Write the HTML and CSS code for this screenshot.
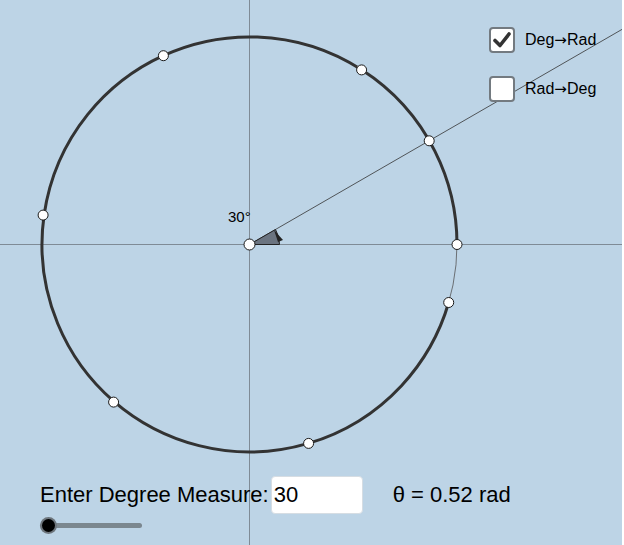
FILE: index.html
```html
<!DOCTYPE html>
<html>
<head>
<meta charset="utf-8">
<link rel="stylesheet" href="styles.css">
</head>
<body>
<div class="applet">
  <svg class="canvas" width="622" height="545" viewBox="0 0 622 545">
    <line class="axis" x1="249.5" y1="0" x2="249.5" y2="545"/>
    <line class="axis" x1="0" y1="244.5" x2="622" y2="244.5"/>
    <circle class="thin" cx="249.5" cy="244.5" r="207.5"/>
    <path class="thick" d="M457 244.5 A207.5 207.5 0 1 0 448.7 302.5"/>
    <line class="ray" x1="249.5" y1="244.5" x2="622" y2="29.4"/>
    <path class="sector" d="M249.5 244.5 L279.5 244.5 A30 30 0 0 0 275.5 229.5 Z"/>
    <path class="arrow" d="M274 230 L278 242 L283 240 Z"/>
    <g class="pts">
      <circle cx="457" cy="244.5" r="5"/>
      <circle cx="361.6" cy="69.9" r="5"/>
      <circle cx="163.4" cy="55.7" r="5"/>
      <circle cx="43.1" cy="215.1" r="5"/>
      <circle cx="113.6" cy="402.1" r="5"/>
      <circle cx="308.6" cy="443.4" r="5"/>
      <circle cx="448.7" cy="302.5" r="5"/>
      <circle cx="429.2" cy="140.8" r="5"/>
      <circle cx="249.5" cy="244.5" r="5.5"/>
    </g>
    <text class="lbl" x="228" y="222">30°</text>
  </svg>

  <div class="toggles">
    <label class="toggle">
      <span class="box checked">
        <svg width="22" height="22" viewBox="0 0 22 22"><path d="M4 11.5 L9 16.5 L18 5" fill="none" stroke="#333" stroke-width="3.6" stroke-linecap="round" stroke-linejoin="round"/></svg>
      </span>
      <span class="txt">Deg<span class="arr">→</span>Rad</span>
    </label>
    <label class="toggle">
      <span class="box"></span>
      <span class="txt">Rad<span class="arr">→</span>Deg</span>
    </label>
  </div>

  <div class="controls">
    <div class="entry">
      <span class="caption">Enter Degree Measure:</span>
      <span class="field">30</span>
      <span class="result">θ = 0.52 rad</span>
    </div>
    <div class="slider">
      <span class="knob"></span>
    </div>
  </div>
</div>
</body>
</html>
```

FILE: styles.css
```css
html, body {
  margin: 0;
  padding: 0;
  background: #ffffff;
}
.applet {
  position: relative;
  width: 622px;
  height: 545px;
  background: #bdd4e6;
  overflow: hidden;
  font-family: "Liberation Sans", Arial, sans-serif;
  color: #000;
}
.canvas {
  position: absolute;
  left: 0;
  top: 0;
}
.axis {
  stroke: #7f8b96;
  stroke-width: 1;
}
.thin {
  fill: none;
  stroke: #6a6f74;
  stroke-width: 1;
}
.thick {
  fill: none;
  stroke: #333333;
  stroke-width: 3;
}
.ray {
  stroke: #333;
  stroke-width: 0.8;
}
.sector {
  fill: #6b7480;
  stroke: #222;
  stroke-width: 1;
}
.arrow {
  fill: #222;
}
.pts circle {
  fill: #ffffff;
  stroke: #1a1a1a;
  stroke-width: 1;
}
.lbl {
  font-family: "Liberation Sans", Arial, sans-serif;
  font-size: 15px;
  fill: #000;
}
.toggles {
  position: absolute;
  left: 489px;
  top: 27px;
  display: flex;
  flex-direction: column;
  gap: 23px;
}
.toggle {
  display: flex;
  align-items: center;
  gap: 10px;
  height: 26px;
}
.box {
  box-sizing: border-box;
  width: 26px;
  height: 26px;
  border: 2px solid #737a80;
  border-radius: 4px;
  background: #fff;
  display: flex;
  align-items: center;
  justify-content: center;
}
.txt {
  font-size: 16px;
}
.arr {
  font-family: "DejaVu Sans", sans-serif;
  font-size: 15px;
}
.controls {
  position: absolute;
  left: 40px;
  top: 476px;
  display: flex;
  flex-direction: column;
  gap: 9px;
}
.entry {
  display: flex;
  align-items: center;
  height: 38px;
}
.caption {
  font-size: 22px;
  margin-right: 2px;
}
.field {
  box-sizing: border-box;
  width: 92px;
  height: 38px;
  background: #fff;
  border: 1px solid #d6dde3;
  border-radius: 4px;
  font-size: 22px;
  padding-left: 2px;
  display: flex;
  align-items: center;
}
.result {
  font-size: 22px;
  margin-left: 30px;
}
.slider {
  position: relative;
  width: 102px;
  height: 5px;
  background: #7b878f;
  border-radius: 3px;
}
.knob {
  position: absolute;
  left: 2px;
  top: -4px;
  width: 13px;
  height: 13px;
  border-radius: 50%;
  background: #000;
  box-shadow: 0 0 0 2px #6e767d;
}
```
